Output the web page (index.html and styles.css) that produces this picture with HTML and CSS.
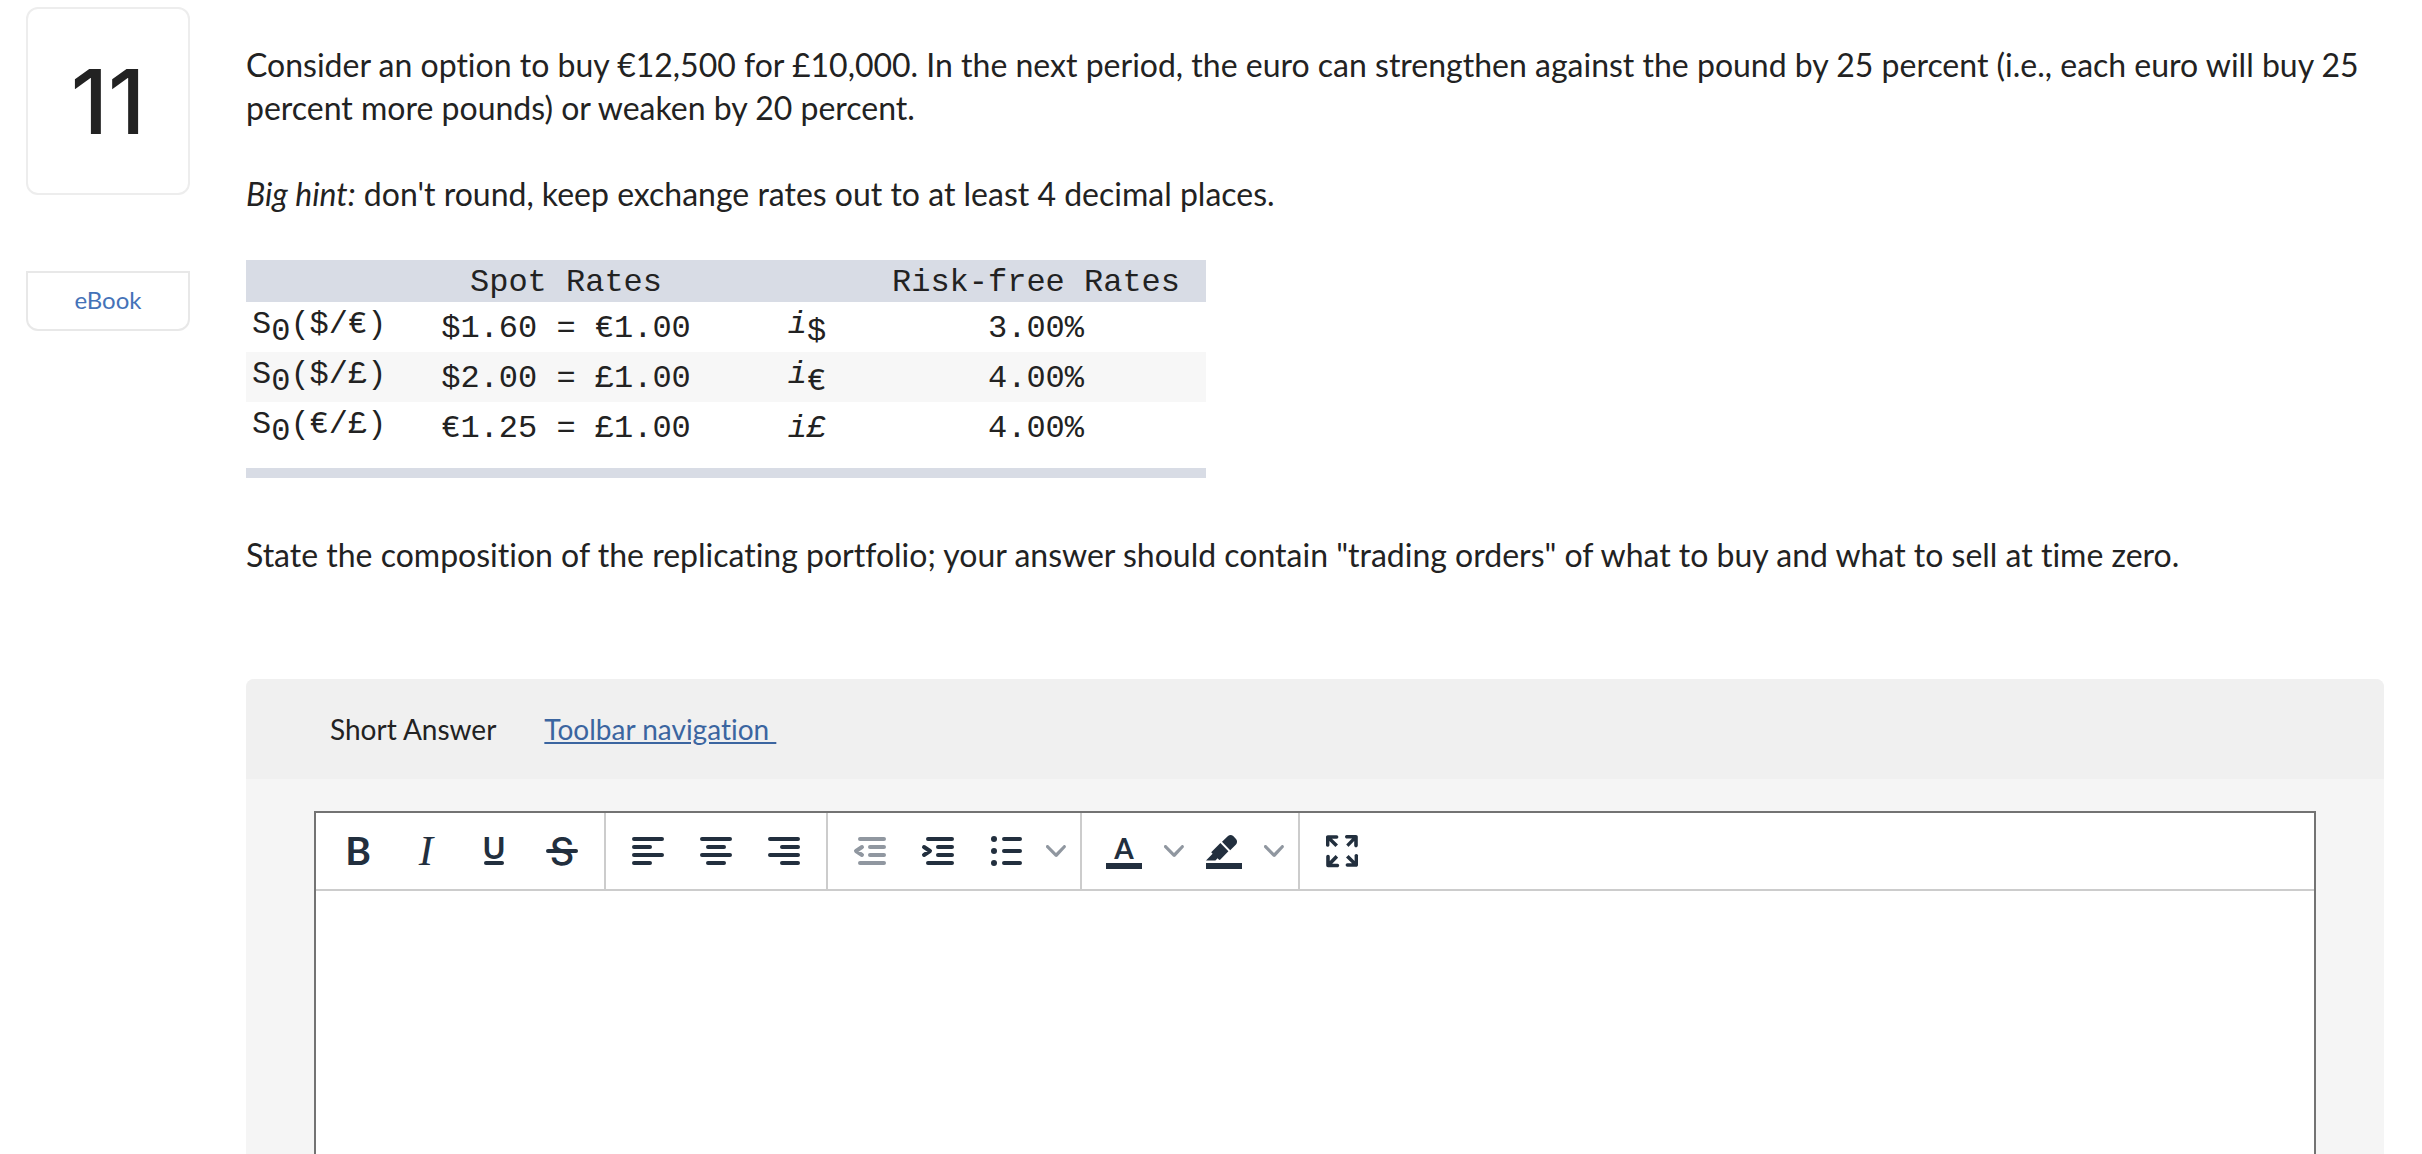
FILE: index.html
```html
<!DOCTYPE html>
<html lang="en">
<head>
  <meta charset="UTF-8">
  <meta name="viewport" content="width=device-width, initial-scale=1.0">
  <title>Question 11</title>
  <link rel="stylesheet" href="styles.css">
</head>
<body>
  <div class="page">
    <aside class="sidebar">
      <div class="question-number">11</div>
      <a class="ebook-link" href="#ebook">eBook</a>
    </aside>

    <main class="question">
      <p>Consider an option to buy €12,500 for £10,000. In the next period, the euro can strengthen against the pound by 25 percent (i.e., each euro will buy 25 percent more pounds) or weaken by 20 percent.</p>
      <p><em>Big hint:</em> don't round, keep exchange rates out to at least 4 decimal places.</p>

      <table class="rates">
        <colgroup>
          <col class="col-pair">
          <col class="col-spot">
          <col class="col-symbol">
          <col class="col-rate">
        </colgroup>
        <thead>
          <tr>
            <th></th>
            <th scope="col">Spot Rates</th>
            <th></th>
            <th scope="col">Risk-free Rates</th>
          </tr>
        </thead>
        <tbody>
          <tr>
            <td class="pair">S<sub>0</sub>($/€)</td>
            <td>$1.60 = €1.00</td>
            <td><i>i</i><sub>$</sub></td>
            <td>3.00%</td>
          </tr>
          <tr>
            <td class="pair">S<sub>0</sub>($/£)</td>
            <td>$2.00 = £1.00</td>
            <td><i>i</i><sub>€</sub></td>
            <td>4.00%</td>
          </tr>
          <tr>
            <td class="pair">S<sub>0</sub>(€/£)</td>
            <td>€1.25 = £1.00</td>
            <td><i>i£</i></td>
            <td>4.00%</td>
          </tr>
        </tbody>
      </table>

      <p>State the composition of the replicating portfolio; your answer should contain "trading orders" of what to buy and what to sell at time zero.</p>

      <section class="answer">
        <div class="answer-header">
          <label for="answer-text">Short Answer</label>
          <a href="#toolbar-help">Toolbar navigation&nbsp;</a>
        </div>
        <div class="editor">
          <div class="toolbar" role="toolbar" aria-label="Formatting">
            <div class="group">
              <button type="button" class="tool" aria-label="Bold">
                <svg class="icon" viewBox="0 0 48 48"><text class="glyph-bold" x="24" y="38">B</text></svg>
              </button>
              <button type="button" class="tool" aria-label="Italic">
                <svg class="icon" viewBox="0 0 48 48"><text class="glyph-italic" x="24" y="38">I</text></svg>
              </button>
              <button type="button" class="tool" aria-label="Underline">
                <svg class="icon" viewBox="0 0 48 48"><text class="glyph-underline" x="24" y="32">U</text><path class="line wide" d="M16 36h16"/></svg>
              </button>
              <button type="button" class="tool" aria-label="Strikethrough">
                <svg class="icon" viewBox="0 0 48 48"><text class="glyph-strike" x="24" y="38">S</text><path class="line wide" d="M10 24h28"/></svg>
              </button>
            </div>
            <div class="group">
              <button type="button" class="tool" aria-label="Align left">
                <svg class="icon" viewBox="0 0 24 24"><path class="line" d="M5 6h14M5 10h8M5 14h14M5 18h8"/></svg>
              </button>
              <button type="button" class="tool" aria-label="Align center">
                <svg class="icon" viewBox="0 0 24 24"><path class="line" d="M5 6h14M8 10h8M5 14h14M8 18h8"/></svg>
              </button>
              <button type="button" class="tool" aria-label="Align right">
                <svg class="icon" viewBox="0 0 24 24"><path class="line" d="M5 6h14M11 10h8M5 14h14M11 18h8"/></svg>
              </button>
            </div>
            <div class="group">
              <button type="button" class="tool" aria-label="Decrease indent" disabled>
                <svg class="icon" viewBox="0 0 24 24"><path class="line" d="M7 6h12M12 10h7M12 14h7M7 18h12M8 10l-3 2 3 2"/></svg>
              </button>
              <button type="button" class="tool" aria-label="Increase indent">
                <svg class="icon" viewBox="0 0 24 24"><path class="line" d="M7 6h12M12 10h7M12 14h7M7 18h12M5 10l3 2-3 2"/></svg>
              </button>
              <button type="button" class="tool" aria-label="Bullet list">
                <svg class="icon" viewBox="0 0 24 24"><circle cx="6" cy="6" r="1.5"/><circle cx="6" cy="12" r="1.5"/><circle cx="6" cy="18" r="1.5"/><path class="line" d="M11 6h8M11 12h8M11 18h8"/></svg>
              </button>
              <button type="button" class="more" aria-label="Bullet list styles">
                <svg class="chevron" viewBox="0 0 10 10"><path d="M8.7 2.2c.3-.3.8-.3 1 0 .4.4.4.9 0 1.2L5.7 7.8c-.3.3-.9.3-1.2 0L.2 3.4a.8.8 0 0 1 0-1.2c.3-.3.8-.3 1.1 0L5 6l3.7-3.8Z"/></svg>
              </button>
            </div>
            <div class="group">
              <button type="button" class="tool" aria-label="Text color">
                <svg class="icon" viewBox="0 0 48 48"><text class="glyph-color" x="24" y="32">A</text><path d="M6 36h36v6H6z"/></svg>
              </button>
              <button type="button" class="more" aria-label="Text color palette">
                <svg class="chevron" viewBox="0 0 10 10"><path d="M8.7 2.2c.3-.3.8-.3 1 0 .4.4.4.9 0 1.2L5.7 7.8c-.3.3-.9.3-1.2 0L.2 3.4a.8.8 0 0 1 0-1.2c.3-.3.8-.3 1.1 0L5 6l3.7-3.8Z"/></svg>
              </button>
              <button type="button" class="tool" aria-label="Highlight color">
                <svg class="icon" viewBox="0 0 24 24"><path d="M3 18h18v3H3z"/><path d="M7.7 16.7H3l3.3-3.3-.7-.8L10.2 8l4 4.1-4 4.2c-.2.2-.6.2-.8 0l-.6-.7-1.1 1.1Zm3.3-9.3 3-2.9a2 2 0 0 1 2.6 0L18 6c.7.7.7 2 0 2.7l-2.9 2.9Z"/></svg>
              </button>
              <button type="button" class="more" aria-label="Highlight color palette">
                <svg class="chevron" viewBox="0 0 10 10"><path d="M8.7 2.2c.3-.3.8-.3 1 0 .4.4.4.9 0 1.2L5.7 7.8c-.3.3-.9.3-1.2 0L.2 3.4a.8.8 0 0 1 0-1.2c.3-.3.8-.3 1.1 0L5 6l3.7-3.8Z"/></svg>
              </button>
            </div>
            <div class="group">
              <button type="button" class="tool" aria-label="Fullscreen">
                <svg class="icon" viewBox="0 0 24 24"><path d="m15.3 10-1.2-1.3 2.9-3h-2.3a.9.9 0 1 1 0-1.7H19c.5 0 .9.4.9.9v4.4a.9.9 0 1 1-1.8 0V7l-2.9 3Zm0 4 3 3v-2.3a.9.9 0 1 1 1.7 0V19c0 .5-.4.9-.9.9h-4.4a.9.9 0 1 1 0-1.8H17l-3-2.9 1.3-1.2ZM10 15.4l-2.9 3h2.3a.9.9 0 1 1 0 1.7H5a.9.9 0 0 1-.9-.9v-4.4a.9.9 0 1 1 1.8 0V17l2.9-3 1.2 1.3ZM8.7 10 5.7 7v2.3a.9.9 0 0 1-1.7 0V5c0-.5.4-.9.9-.9h4.4a.9.9 0 0 1 0 1.8H7l3 2.9-1.3 1.2Z"/></svg>
              </button>
            </div>
          </div>
          <textarea id="answer-text"></textarea>
        </div>
      </section>
    </main>
  </div>
</body>
</html>
```

FILE: styles.css
```css
* {
  margin: 0;
  padding: 0;
  box-sizing: border-box;
}

html, body {
  height: 100%;
  overflow: hidden;
}

body {
  font-family: 'Proxima Nova', Lato, sans-serif;
  font-size: 32px;
  font-variant-ligatures: none;
  line-height: 43px;
  color: #222;
  background: #fff;
}

.page {
  display: flex;
  align-items: flex-start;
  gap: 56px;
  padding: 7px 38px 0 26px;
}

/* Left column */

.sidebar {
  flex: 0 0 164px;
}

.question-number {
  display: flex;
  align-items: center;
  justify-content: center;
  height: 188px;
  margin-bottom: 76px;
  border: 2px solid #ededed;
  border-radius: 12px;
  font-family: 'Proxima Nova', Inter, sans-serif;
  font-size: 90px;
  font-weight: 500;
}

.ebook-link {
  display: flex;
  align-items: center;
  justify-content: center;
  height: 60px;
  padding-bottom: 4px;
  border: 2px solid #e8e8e8;
  border-radius: 0 0 12px 12px;
  font-size: 24px;
  color: #4472b8;
  text-decoration: none;
}

/* Question text */

.question {
  flex: 1;
  min-width: 0;
  padding-top: 36px;
}

.question p {
  margin-bottom: 43px;
}

.rates {
  width: 960px;
  max-width: 100%;
  margin: 45px 0 55px;
  table-layout: fixed;
  border-spacing: 0;
  font-family: 'Courier New', 'Liberation Mono', monospace;
  line-height: 38px;
  text-align: center;
  white-space: nowrap;
  border-bottom: 10px solid #d8dce5;
}

.col-pair {
  width: 138px;
}

.col-spot {
  width: 364px;
}

.col-symbol {
  width: 118px;
}

.rates th {
  height: 42px;
  padding-top: 4px;
  font-weight: normal;
  background: #d8dce5;
}

.rates td {
  height: 50px;
  padding-top: 4px;
}

.rates .pair {
  padding-left: 6px;
  text-align: left;
}

.rates tbody tr:nth-child(even) {
  background: #f7f7f7;
}

.rates tbody::after {
  content: '';
  display: table-row;
  height: 16px;
}

.rates sub {
  font-size: inherit;
}

/* Answer editor */

.answer {
  margin-top: 103px;
  border-radius: 8px 8px 0 0;
  background: #f5f5f5;
}

.answer-header {
  display: flex;
  align-items: center;
  gap: 48px;
  height: 100px;
  padding: 0 84px;
  border-radius: 8px 8px 0 0;
  background: #f0f0f0;
  font-size: 28px;
}

.answer-header a {
  color: #3b65a0;
}

.editor {
  margin: 32px 68px;
  border: 2px solid #737373;
  background: #fff;
}

.toolbar {
  display: flex;
  height: 78px;
  border-bottom: 2px solid #ccc;
}

.group {
  display: flex;
  align-items: center;
  padding: 0 8px;
}

.group + .group {
  border-left: 2px solid #ccc;
}

.tool, .more {
  display: flex;
  align-items: center;
  justify-content: center;
  height: 68px;
  border: none;
  background: none;
}

.tool {
  width: 68px;
  color: #222f3e;
}

.tool:disabled, .more {
  color: #9097a0;
}

.more {
  width: 32px;
}

.icon {
  width: 48px;
  height: 48px;
  fill: currentColor;
}

.chevron {
  width: 20px;
  height: 20px;
  fill: currentColor;
}

.line {
  fill: none;
  stroke: currentColor;
  stroke-width: 2;
  stroke-linecap: round;
  stroke-linejoin: round;
}

.line.wide {
  stroke-width: 4;
}

.icon text {
  font-family: Lato, sans-serif;
  font-weight: 700;
  text-anchor: middle;
}

.icon .glyph-bold {
  font-size: 39px;
}

.icon .glyph-italic {
  font-family: 'Liberation Serif', serif;
  font-size: 43px;
  font-style: italic;
  font-weight: 400;
}

.icon .glyph-underline {
  font-size: 31px;
}

.icon .glyph-strike {
  font-family: Inter, sans-serif;
  font-size: 38px;
  font-weight: 500;
}

.icon .glyph-color {
  font-size: 28px;
}

textarea {
  display: block;
  width: 100%;
  height: 400px;
  padding: 24px;
  border: none;
  outline: none;
  resize: none;
  font: inherit;
  color: inherit;
}
```
